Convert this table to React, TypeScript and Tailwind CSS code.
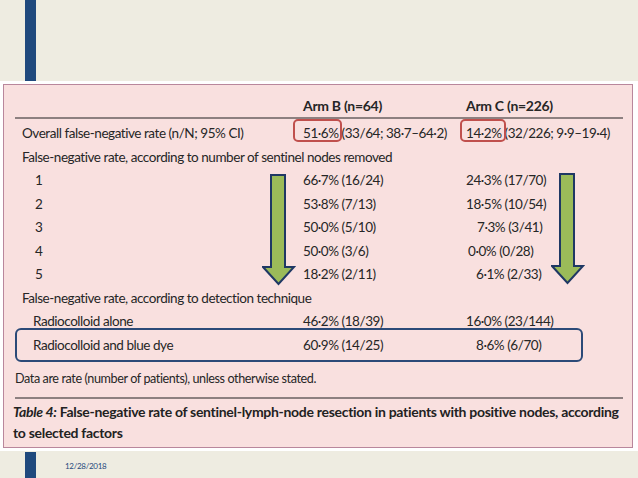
import React from 'react';

type Row = { label: string; b: string; c: string; indent?: boolean; cPad?: string };

const rows: Row[] = [
  { label: 'Overall false-negative rate (n/N; 95% CI)', b: '51·6% (33/64; 38·7–64·2)', c: '14·2% (32/226; 9·9–19·4)' },
  { label: 'False-negative rate, according to number of sentinel nodes removed', b: '', c: '' },
  { label: '1', b: '66·7% (16/24)', c: '24·3% (17/70)', indent: true },
  { label: '2', b: '53·8% (7/13)', c: '18·5% (10/54)', indent: true },
  { label: '3', b: '50·0% (5/10)', c: '7·3% (3/41)', indent: true, cPad: 'pl-[11px]' },
  { label: '4', b: '50·0% (3/6)', c: '0·0% (0/28)', indent: true, cPad: 'pl-[2px]' },
  { label: '5', b: '18·2% (2/11)', c: '6·1% (2/33)', indent: true, cPad: 'pl-[10px]' },
  { label: 'False-negative rate, according to detection technique', b: '', c: '' },
  { label: 'Radiocolloid alone', b: '46·2% (18/39)', c: '16·0% (23/144)', indent: true },
  { label: 'Radiocolloid and blue dye', b: '60·9% (14/25)', c: '8·6% (6/70)', indent: true, cPad: 'pl-[10px]' },
];

function Arrow({ left, top }: { left: string; top: string }) {
  return (
    <svg className={`absolute ${left} ${top}`} width="34" height="112" viewBox="0 0 34 112">
      <polygon
        points="9,1 23,1 23,93 32,93 16.5,110 1,93 9,93"
        fill="#9bbb59"
        stroke="#1f3864"
        strokeWidth="2"
      />
    </svg>
  );
}

export default function App() {
  return (
    <div
      className="relative w-[638px] h-[478px] bg-[#eeece1] flex flex-col overflow-hidden"
      style={{ fontFamily: 'Lato, "Open Sans", sans-serif' }}
    >
      <div className="h-[81px] shrink-0">
        <div className="ml-[25px] w-[11px] h-full bg-[#1f497d]" />
      </div>

      <div className="h-[370px] shrink-0 bg-white pt-[3px] pb-[3px] pl-[3px] pr-[5px] flex">
        <div className="flex-1 border border-[#b9879c] bg-[#f9e0df] pl-[11px] pr-[9px] pt-[8px] text-[#262626] text-[13.5px] tracking-[-0.45px]">
          <div className="grid grid-cols-[288px_163px_1fr] h-[24px] items-center font-bold text-[14px] tracking-[-0.3px]">
            <div />
            <div>Arm B (n=64)</div>
            <div>Arm C (n=226)</div>
          </div>
          <div className="h-[2px] bg-[#8d8080]" />
          <div className="pt-[2.5px]">
            {rows.map((r) => (
              <div key={r.label} className="grid grid-cols-[288px_163px_1fr] h-[23.5px] items-center whitespace-nowrap">
                <div className={r.indent ? (r.label.length < 3 ? 'pl-[20px]' : 'pl-[18px]') : 'pl-[7px]'}>{r.label}</div>
                <div>{r.b}</div>
                <div className={r.cPad ?? ''}>{r.c}</div>
              </div>
            ))}
          </div>
          <div className="mt-[11px] h-[23px] flex items-center text-[12.6px] tracking-[-0.4px] whitespace-nowrap">
            Data are rate (number of patients), unless otherwise stated.
          </div>
          <div className="mt-[6px] h-[2px] bg-[#8d8080]" />
          <div className="mt-[2.5px] -ml-[2px] text-[14px] leading-[21px] font-bold tracking-[-0.3px] text-[#222] whitespace-nowrap">
            <span className="italic">Table 4:</span> False-negative rate of sentinel-lymph-node resection in patients with positive nodes, according
            <br />
            to selected factors
          </div>
        </div>
      </div>

      <div className="flex-1 flex">
        <div className="ml-[25px] w-[11px] mt-[1px] bg-[#1f497d]" />
        <div className="ml-[29px] mt-[9px] text-[8px] tracking-[-0.3px] text-[#1f497d]">12/28/2018</div>
      </div>

      {/* annotations */}
      <div className="absolute left-[293px] top-[119px] w-[49px] h-[23px] border-2 border-[#c0504d] rounded-[5px]" />
      <div className="absolute left-[460px] top-[119px] w-[46px] h-[23px] border-2 border-[#c0504d] rounded-[5px]" />
      <div className="absolute left-[15px] top-[328px] w-[568px] h-[34px] border-2 border-[#2c4a78] rounded-[6px]" />
      <Arrow left="left-[262px]" top="top-[174px]" />
      <Arrow left="left-[551px]" top="top-[173px]" />
    </div>
  );
}
